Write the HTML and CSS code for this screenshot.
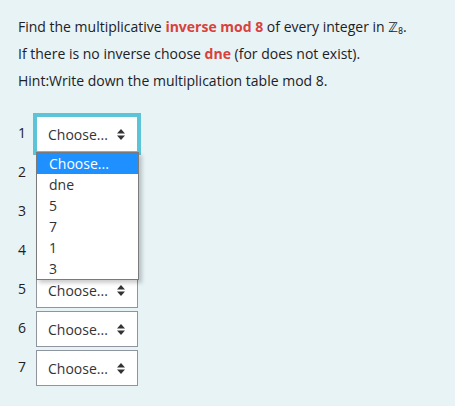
FILE: index.html
```html
<!DOCTYPE html>
<html lang="en">

<head>
    <meta charset="UTF-8">
    <meta name="viewport" content="width=device-width, initial-scale=1.0">
    <title>Inverse mod 8</title>
    <link rel="stylesheet" href="styles.css">
</head>

<body>
    <div class="formulation">
        <p class="line">Find the multiplicative <span class="hl">inverse mod 8</span> of every integer in <span class="zset">ℤ<sub>8</sub></span>.</p>
        <p class="line">If there is no inverse choose <span class="hl">dne</span> (for does not exist).</p>
        <p class="line">Hint:Write down the multiplication table mod 8.</p>

        <div class="answers">
            <div class="row">
                <span class="num">1</span>
                <div class="pick focused">
                    <div class="choice">Choose...<svg class="arrows" width="8" height="11" viewBox="0 0 8 11"><path d="M4 0L8 4.5H0z M4 11L0 6.5H8z" fill="#333"/></svg></div>
                    <ul class="menu">
                        <li class="active">Choose...</li>
                        <li>dne</li>
                        <li>5</li>
                        <li>7</li>
                        <li>1</li>
                        <li>3</li>
                    </ul>
                </div>
            </div>
            <div class="row">
                <span class="num">2</span>
                <div class="pick"><div class="choice">Choose...<svg class="arrows" width="8" height="11" viewBox="0 0 8 11"><path d="M4 0L8 4.5H0z M4 11L0 6.5H8z" fill="#333"/></svg></div></div>
            </div>
            <div class="row">
                <span class="num">3</span>
                <div class="pick"><div class="choice">Choose...<svg class="arrows" width="8" height="11" viewBox="0 0 8 11"><path d="M4 0L8 4.5H0z M4 11L0 6.5H8z" fill="#333"/></svg></div></div>
            </div>
            <div class="row">
                <span class="num">4</span>
                <div class="pick"><div class="choice">Choose...<svg class="arrows" width="8" height="11" viewBox="0 0 8 11"><path d="M4 0L8 4.5H0z M4 11L0 6.5H8z" fill="#333"/></svg></div></div>
            </div>
            <div class="row">
                <span class="num">5</span>
                <div class="pick"><div class="choice">Choose...<svg class="arrows" width="8" height="11" viewBox="0 0 8 11"><path d="M4 0L8 4.5H0z M4 11L0 6.5H8z" fill="#333"/></svg></div></div>
            </div>
            <div class="row">
                <span class="num">6</span>
                <div class="pick"><div class="choice">Choose...<svg class="arrows" width="8" height="11" viewBox="0 0 8 11"><path d="M4 0L8 4.5H0z M4 11L0 6.5H8z" fill="#333"/></svg></div></div>
            </div>
            <div class="row">
                <span class="num">7</span>
                <div class="pick"><div class="choice">Choose...<svg class="arrows" width="8" height="11" viewBox="0 0 8 11"><path d="M4 0L8 4.5H0z M4 11L0 6.5H8z" fill="#333"/></svg></div></div>
            </div>
        </div>
    </div>
</body>

</html>
```

FILE: styles.css
```css
body {
    margin: 0;
    background-color: #e7f3f5;
    font-family: "Open Sans", "Liberation Sans", sans-serif;
    font-size: 14px;
    color: #1d2125;
}

.formulation {
    padding: 13px 18px 0 18px;
    height: 393px;
}

.line {
    margin: 0;
    line-height: 27px;
}

.hl {
    color: #d9413c;
    font-weight: bold;
}

.zset {
    font-family: "DejaVu Sans", sans-serif;
    font-size: 13px;
    line-height: 1;
}

.zset sub {
    font-size: 8px;
    vertical-align: baseline;
    position: relative;
    top: 2px;
}

.answers {
    margin-top: 22px;
    display: flex;
    flex-direction: column;
    gap: 3px;
}

.row {
    display: flex;
    align-items: center;
}

.num {
    width: 18px;
    padding-bottom: 3px;
}

.pick {
    position: relative;
    width: 102px;
    height: 36px;
    box-sizing: border-box;
    border: 1px solid #8f959e;
    background-color: #fff;
}

.pick.focused {
    border-color: #5bc4d6;
    box-shadow: 0 0 0 3px #5bc4d6;
}

.choice {
    display: flex;
    align-items: center;
    justify-content: space-between;
    height: 100%;
    padding: 0 12px 1px 11px;
    color: #333;
}

.menu {
    position: absolute;
    left: -1px;
    top: 35px;
    width: 101px;
    margin: 0;
    padding: 0;
    list-style: none;
    background-color: #fff;
    border: 1px solid #7a7a7a;
    box-shadow: 3px 3px 4px rgba(0, 0, 0, 0.2);
    z-index: 2;
}

.menu li {
    height: 21px;
    line-height: 21px;
    padding-left: 12px;
    color: #333;
}

.menu li.active {
    background-color: #1e90ff;
    color: #fff;
}
```
